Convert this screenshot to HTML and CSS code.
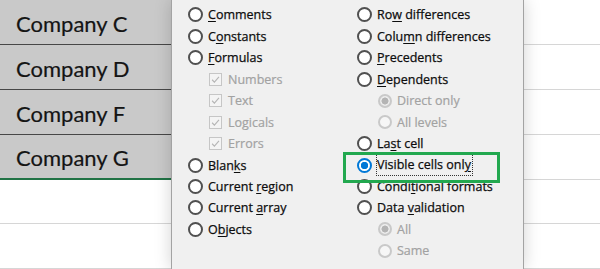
FILE: index.html
```html
<!DOCTYPE html>
<html lang="en">
<head>
    <meta charset="UTF-8" />
    <title>Go To Special</title>
    <link rel="stylesheet" href="styles.css">
</head>
<body>
<div class="screen">
    <!-- feuille de gauche -->
    <div class="sheet sheet-left">
        <div class="cell filled">Company C</div>
        <div class="cell filled">Company D</div>
        <div class="cell filled">Company F</div>
        <div class="cell filled selected-end">Company G</div>
        <div class="cell short"></div>
        <div class="cell"></div>
    </div>

    <!-- boite de dialogue -->
    <div class="dialog">
        <div class="col">
            <div class="opt"><span class="radio"></span><span><u>C</u>omments</span></div>
            <div class="opt"><span class="radio"></span><span>C<u>o</u>nstants</span></div>
            <div class="opt"><span class="radio"></span><span><u>F</u>ormulas</span></div>
            <div class="opt sub disabled"><span class="check"><svg viewBox="0 0 13 13"><polyline points="2.5,6.8 5.2,9.6 10.6,3.4" /></svg></span><span>Numbers</span></div>
            <div class="opt sub disabled"><span class="check"><svg viewBox="0 0 13 13"><polyline points="2.5,6.8 5.2,9.6 10.6,3.4" /></svg></span><span>Text</span></div>
            <div class="opt sub disabled"><span class="check"><svg viewBox="0 0 13 13"><polyline points="2.5,6.8 5.2,9.6 10.6,3.4" /></svg></span><span>Logicals</span></div>
            <div class="opt sub disabled"><span class="check"><svg viewBox="0 0 13 13"><polyline points="2.5,6.8 5.2,9.6 10.6,3.4" /></svg></span><span>Errors</span></div>
            <div class="opt"><span class="radio"></span><span>Blan<u>k</u>s</span></div>
            <div class="opt"><span class="radio"></span><span>Current <u>r</u>egion</span></div>
            <div class="opt"><span class="radio"></span><span>Current <u>a</u>rray</span></div>
            <div class="opt"><span class="radio"></span><span>O<u>b</u>jects</span></div>
        </div>
        <div class="col">
            <div class="opt"><span class="radio"></span><span>Ro<u>w</u> differences</span></div>
            <div class="opt"><span class="radio"></span><span>Colu<u>m</u>n differences</span></div>
            <div class="opt"><span class="radio"></span><span><u>P</u>recedents</span></div>
            <div class="opt"><span class="radio"></span><span><u>D</u>ependents</span></div>
            <div class="opt sub disabled"><span class="radio dot"></span><span>Direct only</span></div>
            <div class="opt sub disabled"><span class="radio"></span><span>All levels</span></div>
            <div class="opt"><span class="radio"></span><span>La<u>s</u>t cell</span></div>
            <div class="opt highlighted"><span class="radio on"></span><span class="focus">Visible cells onl<u>y</u></span></div>
            <div class="opt"><span class="radio"></span><span>Condi<u>t</u>ional formats</span></div>
            <div class="opt"><span class="radio"></span><span>Data <u>v</u>alidation</span></div>
            <div class="opt sub disabled"><span class="radio dot"></span><span>All</span></div>
            <div class="opt sub disabled"><span class="radio"></span><span>Same</span></div>
        </div>
    </div>

    <!-- feuille de droite -->
    <div class="sheet sheet-right">
        <div class="cell"></div>
        <div class="cell"></div>
        <div class="cell"></div>
        <div class="cell"></div>
        <div class="cell short"></div>
        <div class="cell"></div>
    </div>
</div>
</body>
</html>
```

FILE: styles.css
```css
/* Base */
* {
    box-sizing: border-box;
}
body {
    margin: 0;
    background: #fff;
    overflow: hidden;
}
.screen {
    display: grid;
    grid-template-columns: 171px 353px 1fr;
    width: 600px;
    height: 269px;
    overflow: hidden;
}

/* Feuilles Excel */
.sheet {
    display: flex;
    flex-direction: column;
}
.cell {
    flex: none;
    height: 45px;
    border-bottom: 1px solid #d6d6d6;
    display: flex;
    align-items: center;
    padding: 2px 0 0 16px;
    font-family: Lato, "Liberation Sans", sans-serif;
    font-size: 22px;
    color: #141414;
    -webkit-text-stroke: 0.2px #141414;
}
.cell.short {
    height: 44px;
}
.cell.filled {
    background: #c9c9c9;
    border-bottom-color: #474747;
}
.cell.selected-end {
    border-bottom: 2px solid #217346;
}

/* Boite de dialogue */
.dialog {
    position: relative;
    z-index: 1;
    background: #f0f0f0;
    border-left: 1px solid #a3a3a3;
    border-right: 1px solid #a3a3a3;
    box-shadow: 0 0 16px rgba(0,0,0,0.18);
    display: grid;
    grid-template-columns: 169px 1fr;
    padding: 4px 0 0 16px;
    font-family: "Open Sans", "Noto Sans", sans-serif;
    font-size: 12.5px;
    color: #0d0d0d;
    -webkit-text-stroke: 0.25px #0d0d0d;
}
.opt {
    display: flex;
    align-items: center;
    gap: 5px;
    height: 21.47px;
    white-space: nowrap;
}
.opt.sub {
    padding-left: 21px;
}
.opt.disabled {
    color: #a2a2a2;
    -webkit-text-stroke: 0.2px #a2a2a2;
}
.opt u {
    text-underline-offset: 2px;
}

.radio {
    flex: none;
    width: 15px;
    height: 15px;
    border-radius: 50%;
    border: 2px solid #505050;
    background: #fff;
}
.radio.on {
    border-color: #0078d7;
    background: radial-gradient(circle, #0078d7 0 3.4px, #fff 4px);
}
.disabled .radio {
    width: 14px;
    height: 14px;
    border-color: #c9c9c9;
    background: #f6f6f6;
}
.disabled .radio.dot {
    background: radial-gradient(circle, #b4b4b4 0 3.2px, #ececec 3.8px);
}

.check {
    flex: none;
    width: 13px;
    height: 13px;
    border: 1px solid #c6c6c6;
    background: #f4f4f4;
    margin-right: 1px;
}
.check svg {
    display: block;
    width: 11px;
    height: 11px;
    fill: none;
    stroke: #b5b5b5;
    stroke-width: 1.3;
}

/* Option mise en evidence */
.highlighted {
    position: relative;
}
.highlighted::before {
    content: "";
    position: absolute;
    left: -14px;
    top: -2px;
    width: 151px;
    height: 25px;
    border: 3px solid #22a84f;
}
.focus {
    outline: 1px dotted #333;
    outline-offset: 0;
    padding: 1px 1px 2px 0;
}
```
